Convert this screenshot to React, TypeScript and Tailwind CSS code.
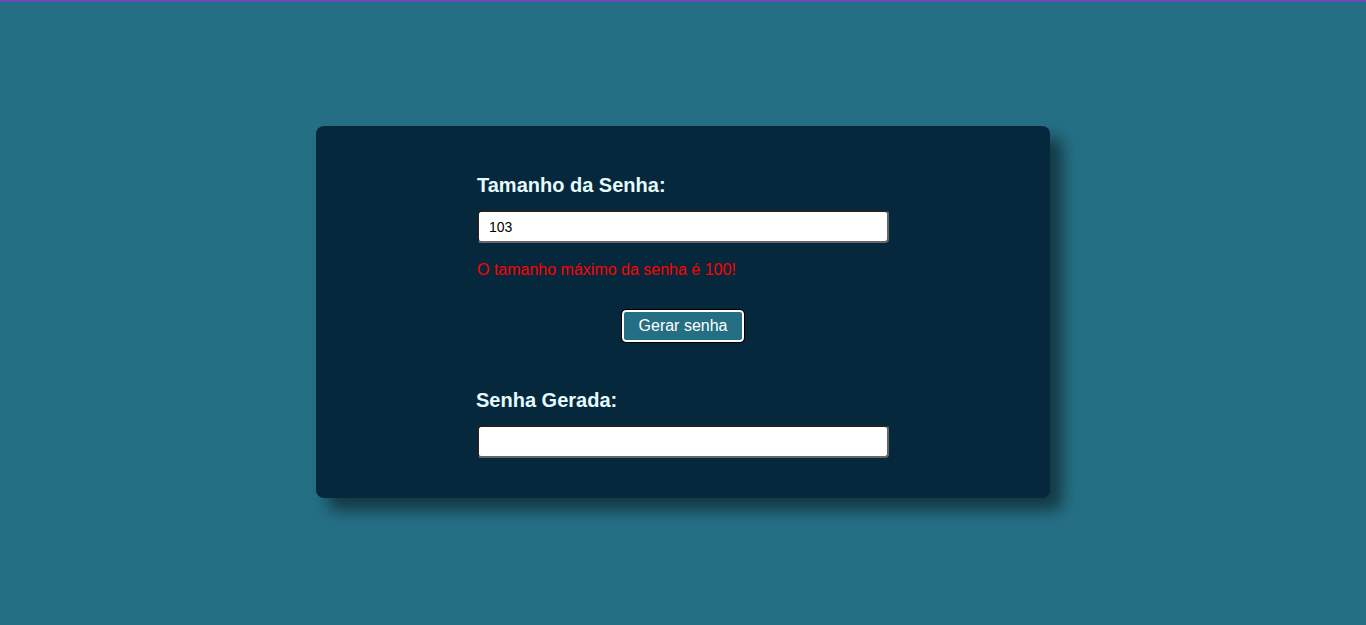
export default function App() {
  return (
    <div
      className="min-h-screen bg-[#256f85] border-t-2 border-[#6a4bbd] flex justify-center pt-[124px]"
      style={{ fontFamily: '"Liberation Sans", Arial, sans-serif' }}
    >
      <div className="w-[734px] h-[372px] bg-[#05283c] rounded-lg shadow-[12px_12px_16px_rgba(0,0,0,0.5)] flex justify-center pt-[48px]">
        <div className="w-[412px] flex flex-col">
          <h2 className="text-[20px] leading-[23px] font-bold text-[#e6fbff]">
            Tamanho da Senha:
          </h2>
          <input
            type="number"
            defaultValue="103"
            className="mt-[13px] h-[33px] w-full bg-white rounded-[4px] border-2 border-t-[#222] border-l-[#222] border-b-[#666] border-r-[#666] px-[10px] text-[14px] text-black outline-none"
          />
          <p className="mt-[18px] text-[16px] leading-[18px] text-[#ff0000]">
            O tamanho máximo da senha é 100!
          </p>
          <div className="mt-[31px] flex justify-center">
            <button className="h-[32px] w-[122px] bg-[#256f85] text-white text-[16px] rounded-[4px] border-2 border-white outline outline-1 outline-black">
              Gerar senha
            </button>
          </div>
          <h2 className="mt-[47px] -ml-px text-[20px] leading-[23px] font-bold text-[#e6fbff]">
            Senha Gerada:
          </h2>
          <input
            type="text"
            className="mt-[13px] h-[33px] w-full bg-white rounded-[4px] border-2 border-t-[#222] border-l-[#222] border-b-[#666] border-r-[#666] px-[10px] text-[14px] text-black outline-none"
          />
        </div>
      </div>
    </div>
  );
}
